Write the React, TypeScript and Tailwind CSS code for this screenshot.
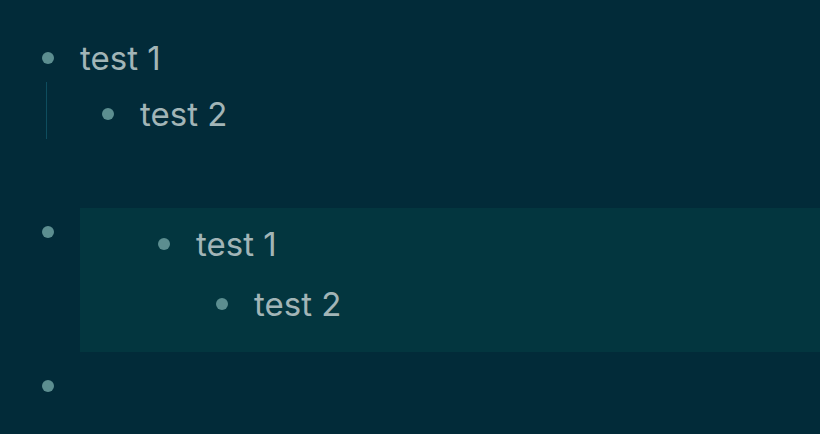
import React from "react";

function Bullet({ className = "" }: { className?: string }) {
  return <span className={`block h-[12px] w-[12px] shrink-0 rounded-full bg-[#5c8e90] ${className}`} />;
}

function Row({ label, height }: { label: string; height: string }) {
  return (
    <div className={`flex items-center ${height}`}>
      <Bullet />
      <span className="ml-[26px] leading-none">{label}</span>
    </div>
  );
}

export default function App() {
  return (
    <div
      className="h-[434px] w-full overflow-hidden bg-[#022b39] text-[33px] text-[#a2b5b7]"
      style={{ fontFamily: "Inter, 'Noto Sans', sans-serif" }}
    >
      {/* plain outline */}
      <div className="pl-[42px] pt-[30px]">
        <Row label="test 1" height="h-[56px]" />
        <div className="-mt-1 ml-[4px] h-[57px] border-l border-[#0e4d5e] pl-[55px] pt-1">
          <Row label="test 2" height="h-[56px]" />
        </div>
      </div>

      {/* embedded block */}
      <div className="mt-[69px] flex">
        <Bullet className="ml-[42px] mt-[18px]" />
        <div className="ml-[26px] h-[144px] flex-1 bg-[#03363f] pl-[78px] pt-[6px]">
          <Row label="test 1" height="h-[60px]" />
          <div className="pl-[58px]">
            <Row label="test 2" height="h-[60px]" />
          </div>
        </div>
      </div>

      {/* empty item */}
      <div className="mt-[28px] pl-[42px]">
        <Bullet />
      </div>
    </div>
  );
}
